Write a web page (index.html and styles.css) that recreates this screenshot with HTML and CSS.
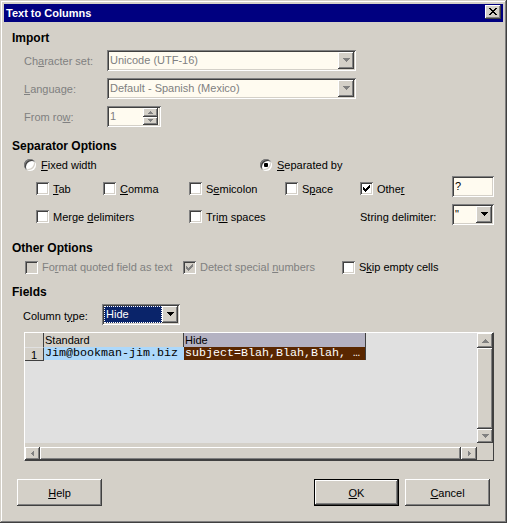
FILE: index.html
```html
<!DOCTYPE html>
<html>
<head>
<meta charset="utf-8">
<title>Text to Columns</title>
<link rel="stylesheet" href="styles.css">
</head>
<body>
<div class="window">
  <div class="titlebar">
    <span class="title">Text to Columns</span>
    <span class="close"><svg width="8" height="7" viewBox="0 0 8 7"><path d="M0 0h2v1H0zM6 0h2v1H6zM1 1h2v1H1zM5 1h2v1H5zM2 2h4v1H2zM3 3h2v1H3zM2 4h4v1H2zM1 5h2v1H1zM5 5h2v1H5zM0 6h2v1H0zM6 6h2v1H6z"/></svg></span>
  </div>
  <div class="dialog">
    <div class="heading h-import">Import</div>

    <div class="frow r-first">
      <span class="flabel dis">Ch<u>a</u>racter set:</span>
      <div class="combo dis wide"><span class="val">Unicode (UTF-16)</span><span class="ddbtn"><svg width="7" height="4" viewBox="0 0 7 4"><path d="M0 0h7v1H0zM1 1h5v1H1zM2 2h3v1H2zM3 3h1v1H3z"/></svg></span></div>
    </div>
    <div class="frow r-next">
      <span class="flabel dis"><u>L</u>anguage:</span>
      <div class="combo dis wide"><span class="val">Default - Spanish (Mexico)</span><span class="ddbtn"><svg width="7" height="4" viewBox="0 0 7 4"><path d="M0 0h7v1H0zM1 1h5v1H1zM2 2h3v1H2zM3 3h1v1H3z"/></svg></span></div>
    </div>
    <div class="frow r-next">
      <span class="flabel dis">From ro<u>w</u>:</span>
      <div class="spin dis">
        <span class="val">1</span>
        <span class="spinbtns">
          <span class="sbtn"><svg width="5" height="3" viewBox="0 0 5 3"><path d="M2 0h1v1H2zM1 1h3v1H1zM0 2h5v1H0z"/></svg></span>
          <span class="sbtn"><svg width="5" height="3" viewBox="0 0 5 3"><path d="M0 0h5v1H0zM1 1h3v1H1zM2 2h1v1H2z"/></svg></span>
        </span>
      </div>
    </div>

    <div class="heading h-sep">Separator Options</div>
    <div class="radios">
      <label class="opt"><span class="radio"></span><span><u>F</u>ixed width</span></label>
      <label class="opt"><span class="radio on"></span><span><u>S</u>eparated by</span></label>
    </div>
    <div class="seps">
      <label class="opt low"><span class="cb"></span><span><u>T</u>ab</span></label>
      <label class="opt low"><span class="cb"></span><span><u>C</u>omma</span></label>
      <label class="opt low"><span class="cb"></span><span>S<u>e</u>micolon</span></label>
      <label class="opt low"><span class="cb"></span><span>S<u>p</u>ace</span></label>
      <label class="opt low"><span class="cb"><svg class="check" width="7" height="7" viewBox="0 0 7 7"><path d="M6 0h1v1H6zM5 1h2v1H5zM0 2h1v1H0zM4 2h3v1H4zM0 3h2v1H0zM3 3h3v1H3zM0 4h5v1H0zM1 5h3v1H1zM2 6h1v1H2z"/></svg></span><span>Othe<u>r</u></span></label>
      <div class="textbox">?</div>
      <label class="opt low span2"><span class="cb"></span><span>Merge <u>d</u>elimiters</span></label>
      <label class="opt low span2"><span class="cb"></span><span>Tri<u>m</u> spaces</span></label>
      <span class="txt low">Strin<u>g</u> delimiter:</span>
      <div class="combo small"><span class="val">"</span><span class="ddbtn"><svg width="7" height="4" viewBox="0 0 7 4"><path d="M0 0h7v1H0zM1 1h5v1H1zM2 2h3v1H2zM3 3h1v1H3z"/></svg></span></div>
    </div>

    <div class="heading h-other">Other Options</div>
    <div class="others">
      <label class="opt dis"><span class="cb off"></span><span>Fo<u>r</u>mat quoted field as text</span></label>
      <label class="opt dis"><span class="cb off"><svg class="check" width="7" height="7" viewBox="0 0 7 7"><path d="M6 0h1v1H6zM5 1h2v1H5zM0 2h1v1H0zM4 2h3v1H4zM0 3h2v1H0zM3 3h3v1H3zM0 4h5v1H0zM1 5h3v1H1zM2 6h1v1H2z"/></svg></span><span>Detect special <u>n</u>umbers</span></label>
      <label class="opt"><span class="cb"></span><span>S<u>k</u>ip empty cells</span></label>
    </div>

    <div class="heading h-fields">Fields</div>
    <div class="ctrow">
      <span class="ctlabel">Column t<u>y</u>pe:</span>
      <div class="combo ctype"><span class="val sel"><span class="focus">Hide</span></span><span class="ddbtn"><svg width="7" height="4" viewBox="0 0 7 4"><path d="M0 0h7v1H0zM1 1h5v1H1zM2 2h3v1H2zM3 3h1v1H3z"/></svg></span></div>
    </div>

    <div class="grid">
      <div class="gcontent">
        <div class="table">
          <div class="c corner"></div>
          <div class="c hstd">Standard</div>
          <div class="c hhide">Hide</div>
          <div class="c rowhead">1</div>
          <div class="c dstd">Jim@bookman-jim.biz</div>
          <div class="c dhide">subject=Blah,Blah,Blah, …</div>
        </div>
      </div>
      <div class="vscroll">
        <span class="sbtnv"><svg width="7" height="4" viewBox="0 0 7 4"><path d="M3 0h1v1H3zM2 1h3v1H2zM1 2h5v1H1zM0 3h7v1H0z"/></svg></span>
        <span class="vthumb"></span>
        <span class="sbtnv"><svg width="7" height="4" viewBox="0 0 7 4"><path d="M0 0h7v1H0zM1 1h5v1H1zM2 2h3v1H2zM3 3h1v1H3z"/></svg></span>
      </div>
      <div class="hscroll">
        <span class="sbtnh"><svg width="3" height="5" viewBox="0 0 3 5"><path d="M2 0h1v5H2zM1 1h1v3H1zM0 2h1v1H0z"/></svg></span>
        <span class="hthumb"></span>
        <span class="sbtnh"><svg width="3" height="5" viewBox="0 0 3 5"><path d="M0 0h1v5H0zM1 1h1v3H1zM2 2h1v1H2z"/></svg></span>
      </div>
      <div class="sizer"></div>
    </div>

    <div class="buttons">
      <button class="btn"><u>H</u>elp</button>
      <div class="btngroup">
        <button class="btn default"><u>O</u>K</button>
        <button class="btn"><u>C</u>ancel</button>
      </div>
    </div>
  </div>
</div>
</body>
</html>
```

FILE: styles.css
```css
* { box-sizing: border-box; }
html, body { margin: 0; padding: 0; }
body {
  background: #d4d0c8;
  font-family: "Liberation Sans", Arial, sans-serif;
  font-size: 11px;
  color: #000;
}
u { text-underline-offset: 1px; }

.window {
  width: 507px;
  height: 523px;
  padding: 4px;
  background: #d4d0c8;
  box-shadow: inset -1px -1px #404040, inset 1px 1px #d4d0c8, inset -2px -2px #808080, inset 2px 2px #fff;
}

.titlebar {
  height: 18px;
  background: #000080;
  display: flex;
  align-items: center;
  justify-content: space-between;
  padding: 0 2px;
}
.title {
  color: #fff;
  font-weight: bold;
  font-size: 11px;
  line-height: 18px;
}
.close {
  width: 16px;
  height: 14px;
  margin-bottom: 2px;
  background: #d4d0c8;
  box-shadow: inset -1px -1px #404040, inset 1px 1px #fff, inset -2px -2px #808080;
  display: flex;
  align-items: center;
  justify-content: center;
  padding-bottom: 1px;
}
svg { display: block; shape-rendering: crispEdges; }

.dialog { padding: 0 8px; }

.heading {
  font-weight: bold;
  font-size: 12px;
  line-height: 16px;
  height: 16px;
}
.h-import { margin-top: 8px; }
.h-sep { margin-top: 11px; }
.h-other { margin-top: 15px; }
.h-fields { margin-top: 9px; }

.dis { color: #808080; }

.frow {
  display: flex;
  align-items: center;
  height: 21px;
  padding-left: 12px;
}
.r-first { margin-top: 4px; }
.r-next { margin-top: 7px; }
.flabel { width: 83px; }

.combo, .spin, .textbox {
  background: #fffbf0;
  box-shadow: inset 1px 1px #808080, inset -1px -1px #fff, inset 2px 2px #404040, inset -2px -2px #d4d0c8;
}
.combo {
  display: flex;
  height: 21px;
  padding: 2px;
}
.combo .val {
  flex: 1;
  line-height: 17px;
  padding-left: 1px;
  white-space: nowrap;
  overflow: hidden;
}
.ddbtn {
  width: 16px;
  height: 17px;
  background: #d4d0c8;
  box-shadow: inset -1px -1px #404040, inset 1px 1px #fff, inset -2px -2px #808080;
  display: flex;
  align-items: center;
  justify-content: center;
  padding-bottom: 1px;
}
.combo.dis .ddbtn svg, .spin.dis svg { fill: #808080; }
.wide { width: 249px; }

.spin {
  width: 54px;
  height: 21px;
  display: flex;
  padding: 2px;
}
.spin .val { flex: 1; line-height: 17px; padding-left: 1px; }
.spinbtns { display: flex; flex-direction: column; width: 15px; margin-right: 1px; }
.sbtn {
  flex: 1;
  background: #d4d0c8;
  box-shadow: inset -1px -1px #404040, inset 1px 1px #fff, inset -2px -2px #808080;
  display: flex;
  align-items: center;
  justify-content: center;
}

.opt {
  display: flex;
  align-items: center;
  gap: 4px;
  white-space: nowrap;
}
.radios {
  display: grid;
  grid-template-columns: 236px auto;
  height: 16px;
  margin-top: 3px;
  margin-left: 12px;
  align-items: center;
}
.radios .opt { gap: 5px; }
.radio {
  width: 12px;
  height: 12px;
  border-radius: 50%;
  background: #fff;
  box-shadow: inset 1px 1px #808080, inset -1px -1px #fff, inset 2px 2px #404040, inset -2px -2px #d4d0c8;
  display: flex;
  align-items: center;
  justify-content: center;
}
.radio.on::after {
  content: "";
  width: 4px;
  height: 4px;
  border-radius: 1px;
  background: #000;
}

.cb {
  width: 13px;
  height: 13px;
  flex: none;
  background: #fff;
  box-shadow: inset 1px 1px #808080, inset -1px -1px #fff, inset 2px 2px #404040, inset -2px -2px #d4d0c8;
  display: flex;
  align-items: center;
  justify-content: center;
}
.cb.off { background: #d4d0c8; }
.cb.off .check { fill: #808080; }

.seps {
  display: grid;
  grid-template-columns: 67px 86px 96px 75px 92px 42px;
  grid-template-rows: 21px 21px;
  row-gap: 7px;
  margin-top: 3px;
  margin-left: 24px;
  align-items: center;
}
.low { margin-top: 4px; }
.span2 { grid-column: span 2; }
.txt { white-space: nowrap; }
.textbox {
  height: 21px;
  padding: 2px 3px;
  line-height: 17px;
}
.combo.small { width: 42px; }

.others {
  display: grid;
  grid-template-columns: 158px 159px auto;
  height: 16px;
  margin-top: 3px;
  margin-left: 13px;
  align-items: center;
}

.ctrow {
  display: flex;
  align-items: center;
  height: 21px;
  margin-top: 4px;
  padding-left: 11px;
}
.ctlabel { width: 79px; margin-top: 2px; }
.combo.ctype { width: 78px; }
.val.sel {
  background: #0a246a;
  color: #fff;
  padding: 0;
  display: flex;
}
.focus {
  flex: 1;
  border: 1px dotted #fff;
  line-height: 15px;
  padding-left: 1px;
}

.grid {
  margin-top: 7px;
  margin-left: 12px;
  width: 470px;
  height: 129px;
  border: 1px solid;
  border-color: #fff #404040 #404040 #fff;
  display: grid;
  grid-template-columns: 1fr 16px;
  grid-template-rows: 110px 17px;
}
.gcontent { background: #e0e0e0; overflow: hidden; }
.table {
  display: grid;
  grid-template-columns: 19px 140px 182px;
  grid-template-rows: 14px 14px;
}
.c { line-height: 13px; white-space: nowrap; overflow: hidden; }
.corner { background: #d4d0c8; border-right: 1px solid #404040; }
.hstd { background: #d4d0c8; border-right: 1px solid #404040; padding-left: 1px; line-height: 14px; }
.hhide { background: #b4b2c2; border-right: 1px solid #404040; padding-left: 1px; line-height: 14px; }
.rowhead {
  background: #d4d0c8;
  border-right: 1px solid #404040;
  border-bottom: 1px solid #404040;
  border-top: 1px solid #e0e0e0;
  text-align: center;
  line-height: 12px;
  padding-top: 1px;
}
.dstd, .dhide {
  font-family: "Liberation Mono", "DejaVu Sans Mono", monospace;
  font-size: 11.67px;
  line-height: 13px;
  height: 13px;
  padding-left: 1px;
}
.dstd { background: #add8fa; color: #000; }
.dhide { background: #5a2700; color: #fff; border-right: 1px solid #404040; }

.vscroll {
  display: flex;
  flex-direction: column;
  background: #d4d0c8;
}
.sbtnv, .sbtnh, .vthumb, .hthumb {
  background: #d4d0c8;
  box-shadow: inset -1px -1px #404040, inset 1px 1px #fff, inset -2px -2px #808080;
  display: flex;
  align-items: center;
  justify-content: center;
}
.sbtnv { height: 15px; fill: #808080; }
.sbtnv:last-child { height: 14px; }
.vthumb { flex: 1; }
.hscroll {
  display: flex;
  background: #d4d0c8;
  padding-top: 3px;
  border-top: 1px solid #d4d0c8;
}
.sbtnh { width: 15px; fill: #808080; }
.sbtnh:last-child { width: 16px; }
.hthumb { flex: 1; }
.sizer { background: #d4d0c8; }

.buttons {
  display: flex;
  justify-content: space-between;
  margin: 18px 5px 0;
  height: 27px;
}
.btngroup { display: flex; gap: 6px; }
.btn {
  width: 85px;
  height: 27px;
  border: 0;
  padding: 0;
  background: #d4d0c8;
  font-family: "Liberation Sans", Arial, sans-serif;
  font-size: 11px;
  color: #000;
  box-shadow: inset -1px -1px #404040, inset 1px 1px #fff, inset -2px -2px #808080;
}
.btn.default {
  border: 1px solid #000;
}
```
